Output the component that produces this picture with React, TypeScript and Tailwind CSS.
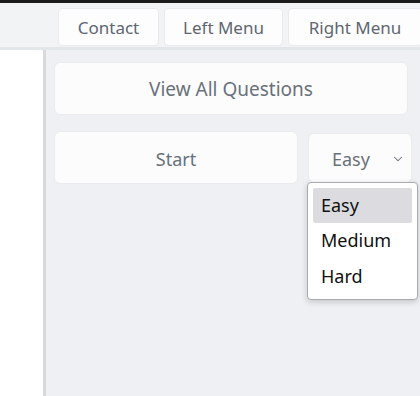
import { ChevronDown } from "lucide-react";

const font = { fontFamily: '"Noto Sans", "Open Sans", sans-serif' };

export default function App() {
  const navItems = ["Contact", "Left Menu", "Right Menu"];

  return (
    <div
      className="w-[420px] h-[396px] overflow-hidden bg-[#eef0f3] flex flex-col"
      style={font}
    >
      {/* top strip */}
      <div className="h-[3px] bg-[#1b1b1b] shrink-0" />

      {/* header */}
      <div className="h-[44px] shrink-0 bg-[#f1f3f5] flex items-end pb-[1px] pl-[58px] gap-[5px] whitespace-nowrap">
        {navItems.map((item) => (
          <button
            key={item}
            className={`h-[38px] shrink-0 rounded-[4px] bg-[#fdfdfe] border border-[#e8eaed] text-[17px] text-[#5f6670] pt-[1px] ${
              item === "Contact"
                ? "w-[101px]"
                : item === "Left Menu"
                  ? "w-[119px]"
                  : "w-[134px]"
            }`}
          >
            {item}
          </button>
        ))}
      </div>
      <div className="h-[3px] bg-[#e3e6e9] shrink-0" />

      {/* body */}
      <div className="flex flex-1">
        <div className="w-[43px] bg-white shrink-0" />
        <div className="w-[3px] bg-[#d8d9db] shrink-0" />
        <div className="flex-1 pl-[8px] pr-[12px] pt-[12px] relative">
          <button className="w-full h-[53px] pt-[2px] rounded-[6px] bg-[#fcfcfd] border border-[#e9ebee] text-[19px] text-[#69717a]">
            View All Questions
          </button>

          <div className="flex items-center mt-[16px] gap-[10px]">
            <button className="w-[244px] h-[53px] pt-[3px] rounded-[6px] bg-[#fcfcfd] border border-[#e9ebee] text-[18px] text-[#69717a]">
              Start
            </button>
            <div className="relative w-[104px] h-[50px] shrink-0 mr-[-4px]">
              <div className="w-full h-full rounded-[6px] bg-[#fcfcfd] border border-[#e9ebee] flex items-center pt-[3px] pl-[23px] pr-[6px]">
                <span className="text-[18px] text-[#69717a] flex-1">Easy</span>
                <ChevronDown size={14} strokeWidth={1.8} className="text-[#69717a]" />
              </div>

              {/* open dropdown */}
              <div className="absolute left-[-1px] top-[49px] w-[111px] bg-white border border-[#a9abae] rounded-[4px] shadow-[0_2px_6px_rgba(0,0,0,0.18)] p-[5px] z-10">
                <div className="h-[35px] bg-[#dcdce0] rounded-[2px] pl-[8px] flex items-center text-[18px] text-[#111]">
                  Easy
                </div>
                <div className="h-[36px] pl-[8px] flex items-center text-[18px] text-[#111]">
                  Medium
                </div>
                <div className="h-[35px] pl-[8px] flex items-center text-[18px] text-[#111]">
                  Hard
                </div>
              </div>
            </div>
          </div>
        </div>
      </div>
    </div>
  );
}
